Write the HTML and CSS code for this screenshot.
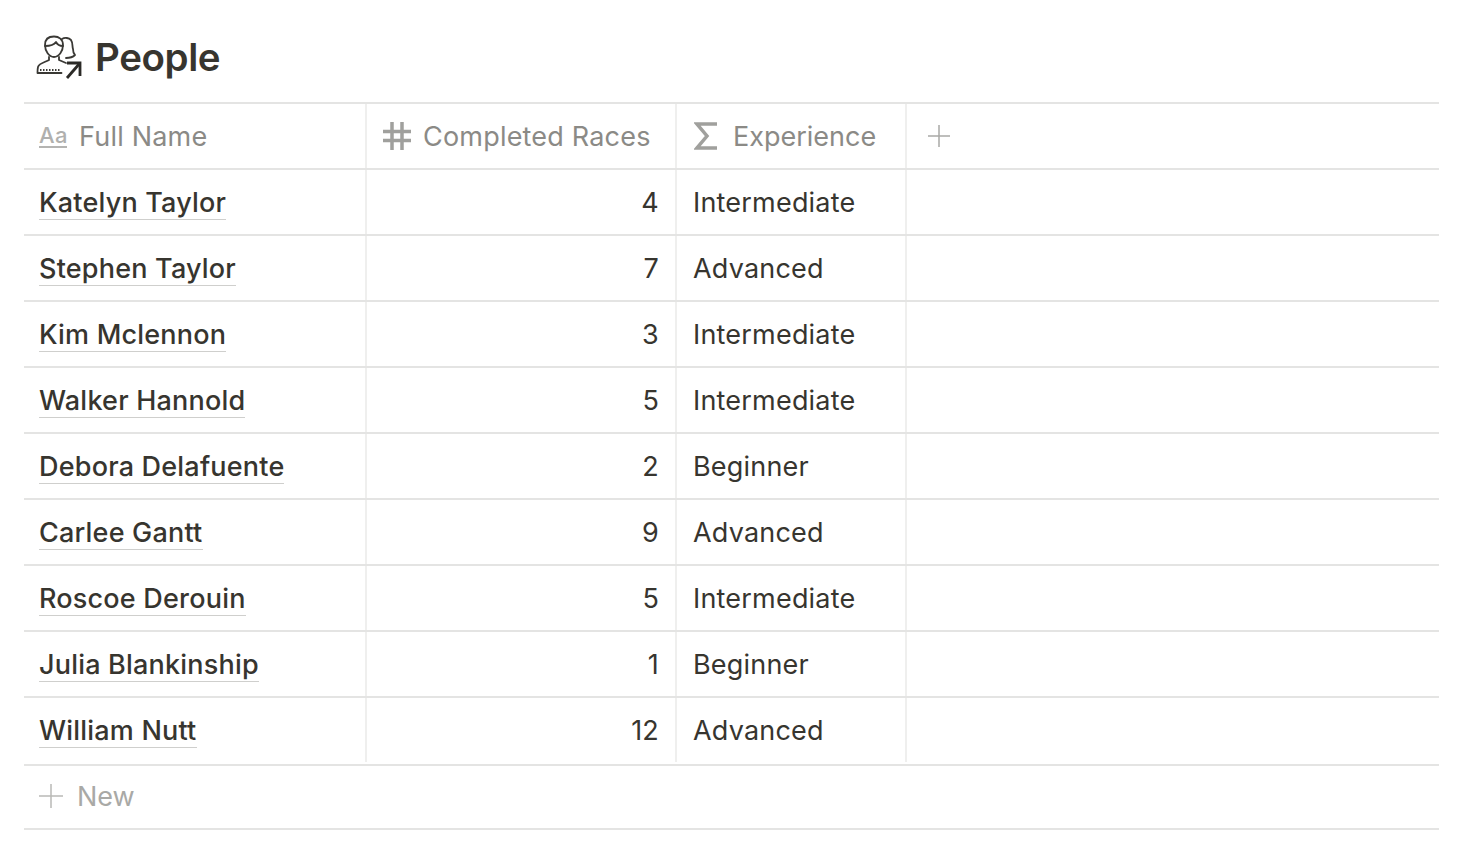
FILE: index.html
```html
<!DOCTYPE html>
<html lang="en">
<head>
<meta charset="utf-8">
<title>People</title>
<link rel="stylesheet" href="styles.css">
</head>
<body>
<main class="page">
  <header class="title">
    <svg class="title-icon" viewBox="0 0 46 44" fill="none" stroke="#3a3935" stroke-width="1.800" stroke-linecap="round" stroke-linejoin="round">
      <path d="M9 10c0-6 4-8.500 9-8.500s9 3 9 8.500c0 6-4 12-9 12s-9-6-9-12z"/>
      <path d="M9 11c4 0 9-1 11-4 1 2 4 4 7 4"/>
      <path d="M26 4c3-2 7-1 9 1 2 3 1 6 2 9 0 3 1 5 2 6-2 2-5 3-9 3"/>
      <path d="M13 22v3c-3 2-10 3-11 7-.5 2-.5 4-.5 6h24"/>
      <path d="M23 22v3l7 3"/>
      <path d="M4 35h20" stroke-dasharray="1.500 1.500" stroke-linecap="butt"/>
      <path d="M31 43l13-15" stroke-width="2.800" stroke="#2b2a27" stroke-linecap="butt"/>
      <path d="M31 28h13v13" stroke-width="2.800" stroke="#2b2a27" stroke-linecap="butt" stroke-linejoin="miter"/>
    </svg>
    <h1 class="title-text">People</h1>
  </header>
  <section class="table">
    <div class="row head">
      <div class="cell name"><span class="aa">Aa</span><span>Full Name</span></div>
      <div class="cell num-h"><svg class="hicon hash" viewBox="0 0 28 28" stroke="#a0a09d" stroke-width="3.500" fill="none"><path d="M9 0v28M19 0v28M0 9.500h28M0 18.500h28"/></svg><span>Completed Races</span></div>
      <div class="cell exp-h"><svg class="hicon sigma" viewBox="0 0 24 28" fill="none" stroke="#a0a09d" stroke-width="3.500"><path d="M23 2H3l10 12L3 26h20"/></svg><span>Experience</span></div>
      <div class="cell add"><svg class="plus" viewBox="0 0 22 22" stroke="#a9a9a6" stroke-width="1.500"><path d="M11 0v22M0 11h22"/></svg></div>
    </div>
    <div class="row"><div class="cell name"><a class="link">Katelyn Taylor</a></div><div class="cell num">4</div><div class="cell exp">Intermediate</div><div class="cell fill"></div></div>
    <div class="row"><div class="cell name"><a class="link">Stephen Taylor</a></div><div class="cell num">7</div><div class="cell exp">Advanced</div><div class="cell fill"></div></div>
    <div class="row"><div class="cell name"><a class="link">Kim Mclennon</a></div><div class="cell num">3</div><div class="cell exp">Intermediate</div><div class="cell fill"></div></div>
    <div class="row"><div class="cell name"><a class="link">Walker Hannold</a></div><div class="cell num">5</div><div class="cell exp">Intermediate</div><div class="cell fill"></div></div>
    <div class="row"><div class="cell name"><a class="link">Debora Delafuente</a></div><div class="cell num">2</div><div class="cell exp">Beginner</div><div class="cell fill"></div></div>
    <div class="row"><div class="cell name"><a class="link">Carlee Gantt</a></div><div class="cell num">9</div><div class="cell exp">Advanced</div><div class="cell fill"></div></div>
    <div class="row"><div class="cell name"><a class="link">Roscoe Derouin</a></div><div class="cell num">5</div><div class="cell exp">Intermediate</div><div class="cell fill"></div></div>
    <div class="row"><div class="cell name"><a class="link">Julia Blankinship</a></div><div class="cell num">1</div><div class="cell exp">Beginner</div><div class="cell fill"></div></div>
    <div class="row last"><div class="cell name"><a class="link">William Nutt</a></div><div class="cell num">12</div><div class="cell exp">Advanced</div><div class="cell fill"></div></div>
    <div class="new"><svg class="plus new-plus" viewBox="0 0 24 24" stroke="#b9b9b6" stroke-width="1.500"><path d="M12 0v24M0 12h24"/></svg><span>New</span></div>
  </section>
</main>
</body>
</html>
```
FILE: styles.css
```css
html, body {
  margin: 0;
  background: #fff;
}
body {
  height: 845px;
  overflow: hidden;
  font-family: Inter, "Liberation Sans", sans-serif;
  color: #37352f;
}
.page {
  padding: 0 23px 0 24px;
}
.title {
  height: 102px;
  box-sizing: border-box;
  padding: 35px 0 0 12px;
  display: flex;
  align-items: flex-start;
}
.title-icon {
  width: 46px;
  height: 44px;
  flex: none;
}
.title-text {
  margin: -1px 0 0 13px;
  font-size: 38.500px;
  line-height: 46px;
  font-weight: 600;
  letter-spacing: -0.4px;
}
.table {
  border-top: 2px solid #e4e4e3;
}
.row {
  display: grid;
  grid-template-columns: 343px 310px 230px 1fr;
  height: 66px;
  box-sizing: border-box;
  border-bottom: 2px solid #e4e4e3;
  font-size: 27px;
  letter-spacing: 0.2px;
}
.last {
  height: 68px;
  padding-bottom: 2px;
}
.cell {
  display: flex;
  align-items: center;
  border-right: 2px solid #efefee;
  box-sizing: border-box;
}
.fill, .add {
  border-right: 0;
}
.head .cell {
  color: #8b8a86;
}
.name {
  padding-left: 15px;
}
.link {
  color: #37352f;
  font-weight: 500;
  border-bottom: 1px solid #cfcfcd;
  line-height: 32px;
  margin-top: 2px;
}
.num {
  justify-content: flex-end;
  padding-right: 16px;
}
.exp {
  padding-left: 16px;
}
.hicon {
  flex: none;
}
.aa {
  flex: none;
  width: 28px;
  box-sizing: border-box;
  margin-right: 12px;
  border-bottom: 2px solid #b4b4b2;
  font-size: 22px;
  font-weight: 500;
  line-height: 22px;
  letter-spacing: 0.500px;
  color: #b0b0ae;
  white-space: nowrap;
}
.num-h {
  padding-left: 16px;
}
.hash {
  width: 28px;
  height: 28px;
  margin-right: 12px;
}
.exp-h {
  padding-left: 17px;
  letter-spacing: 0;
}
.sigma {
  width: 24px;
  height: 28px;
  margin-right: 15px;
}
.add {
  padding-left: 21px;
}
.plus {
  width: 22px;
  height: 22px;
  margin-top: -1px;
}
.new {
  display: flex;
  align-items: center;
  height: 64px;
  box-sizing: border-box;
  border-bottom: 2px solid #e4e4e3;
  padding: 0 0 2px 15px;
  font-size: 27px;
  letter-spacing: 0;
  color: #a9a9a6;
}
.new-plus {
  width: 24px;
  height: 24px;
  margin-right: 14px;
}
```
